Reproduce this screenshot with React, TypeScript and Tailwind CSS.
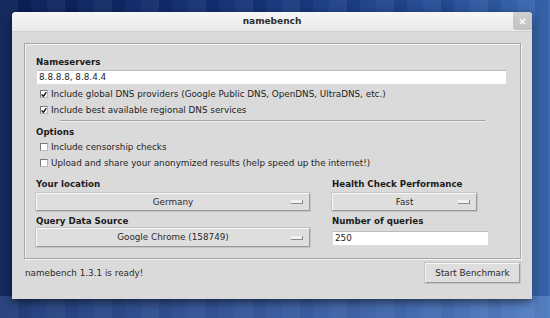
import React from "react";

function Check({ checked }: { checked?: boolean }) {
  return (
    <div className="w-[8px] h-[8px] bg-white border border-t-[#7a7a7a] border-l-[#7a7a7a] border-b-[#b8b8b8] border-r-[#b8b8b8] flex items-center justify-center shrink-0">
      {checked && (
        <svg width="7" height="7" viewBox="0 0 7 7" className="block">
          <path d="M0.8 3.4 L2.6 5.6 L6.2 0.9" stroke="#111" strokeWidth="1.6" fill="none" />
        </svg>
      )}
    </div>
  );
}

function CheckRow({ checked, label, cls }: { checked?: boolean; label: string; cls: string }) {
  return (
    <div className={`h-[14px] flex items-center pl-[4px] gap-[3px] ${cls}`}>
      <Check checked={checked} />
      <span className="text-[8.8px] leading-[14px] text-[#1e1e1e] whitespace-nowrap">{label}</span>
    </div>
  );
}

function Combo({ label, cls }: { label: string; cls: string }) {
  return (
    <div className={`relative flex items-center justify-center bg-[#dedede] border border-t-[#f8f8f8] border-l-[#f8f8f8] border-b-[#9a9a9a] border-r-[#9a9a9a] shadow-[0_0_0_1px_#c4c4c4] ${cls}`}>
      <span className="text-[8.8px] text-[#2a2a2a] leading-none">{label}</span>
      <div className="absolute right-[6px] top-1/2 -translate-y-1/2 w-[12px] h-[4px] bg-[#f2f2f2] border-b border-r border-b-[#8a8a8a] border-r-[#8a8a8a]" />
    </div>
  );
}

function Label({ children }: { children: React.ReactNode }) {
  return <div className="h-[14px] text-[8.7px] leading-[14px] font-bold text-[#1c1c1c] whitespace-nowrap">{children}</div>;
}

export default function App() {
  return (
    <div className="w-[550px] h-[318px] relative overflow-hidden font-['DejaVu_Sans',sans-serif] bg-[linear-gradient(90deg,#0b1f56_0%,#15337a_45%,#244c96_80%,#3a68b2_100%)]">
      <div className="absolute inset-0 bg-[repeating-linear-gradient(90deg,rgba(255,255,255,0.05)_0px,rgba(255,255,255,0.05)_18px,rgba(0,0,0,0.06)_18px,rgba(0,0,0,0.06)_31px,rgba(255,255,255,0.02)_31px,rgba(255,255,255,0.02)_47px)]" />
      <div className="absolute left-0 right-0 bottom-0 h-[22px] bg-[linear-gradient(90deg,rgba(80,120,190,0.35),rgba(120,160,220,0.45))]" />
      {/* window */}
      <div className="absolute left-[12px] top-[12px] w-[520px] h-[287px] bg-[#dadada] rounded-t-[4px] shadow-[0_3px_10px_rgba(0,0,0,0.55)] flex flex-col">
        <div className="relative h-[20px] shrink-0 rounded-t-[4px] bg-[linear-gradient(180deg,#f6f6f6,#e9e9e9)] border-b border-b-[#d0d0d0] flex items-center justify-center">
          <span className="text-[9px] font-bold text-[#2e2e2e] leading-none">namebench</span>
          <div className="absolute right-0 top-0 w-[19px] h-[18px] rounded-tr-[4px] rounded-bl-[3px] bg-[linear-gradient(180deg,#cfcfcf,#c2c2c2)] flex items-center justify-center">
            <svg width="7" height="7" viewBox="0 0 7 7">
              <path d="M1 1 L6 6 M6 1 L1 6" stroke="#fafafa" strokeWidth="1.6" />
            </svg>
          </div>
        </div>
        {/* group box */}
        <div className="ml-[12px] mt-[11px] w-[497px] h-[216px] shrink-0 border border-[#a6a6a6] shadow-[inset_1px_1px_0_#f4f4f4,1px_1px_0_#f4f4f4] pl-[11px]">
          <div className="mt-[11px]">
            <Label>Nameservers</Label>
          </div>
          <div className="mt-[1px] ml-[1px] w-[469px] h-[14px] bg-white border-t border-t-[#bdbdbd] flex items-center pl-[2px]">
            <span className="text-[8.8px] text-[#1e1e1e] leading-none">8.8.8.8, 8.8.4.4</span>
          </div>
          <CheckRow cls="mt-[3px]" checked label="Include global DNS providers (Google Public DNS, OpenDNS, UltraDNS, etc.)" />
          <CheckRow cls="mt-[2px]" checked label="Include best available regional DNS services" />
          <div className="mt-[3px] ml-[24px] w-[425px] h-[1px] bg-[#a4a4a4] shadow-[0_1px_0_#f0f0f0]" />
          <div className="mt-[4px]">
            <Label>Options</Label>
          </div>
          <CheckRow cls="mt-[1px]" label="Include censorship checks" />
          <CheckRow cls="mt-[2px]" label="Upload and share your anonymized results (help speed up the internet!)" />
          <div className="mt-[7px] grid grid-cols-[274px_156px] gap-x-[22px]">
            <Label>Your location</Label>
            <Label>Health Check Performance</Label>
            <Combo cls="mt-[2px] h-[18px] w-[274px]" label="Germany" />
            <Combo cls="mt-[2px] h-[18px] w-[145px]" label="Fast" />
            <div className="mt-[3px]">
              <Label>Query Data Source</Label>
            </div>
            <div className="mt-[3px]">
              <Label>Number of queries</Label>
            </div>
            <Combo cls="h-[19px] w-[274px]" label="Google Chrome (158749)" />
            <div className="mt-[3px] ml-[1px] w-[155px] h-[14px] bg-white border-t border-t-[#bdbdbd] flex items-center pl-[2px]">
              <span className="text-[8.8px] text-[#1e1e1e] leading-none">250</span>
            </div>
          </div>
        </div>
        {/* status row */}
        <div className="mt-[4px] h-[20px] flex items-center justify-between pl-[13px] pr-[12px]">
          <span className="text-[8.8px] text-[#2a2a2a] leading-none">namebench 1.3.1 is ready!</span>
          <div className="w-[95px] h-[20px] flex items-center justify-center bg-[#dedede] border border-t-[#f8f8f8] border-l-[#f8f8f8] border-b-[#9a9a9a] border-r-[#9a9a9a] shadow-[0_0_0_1px_#c4c4c4]">
            <span className="text-[8.8px] text-[#2a2a2a] leading-none">Start Benchmark</span>
          </div>
        </div>
      </div>
    </div>
  );
}
